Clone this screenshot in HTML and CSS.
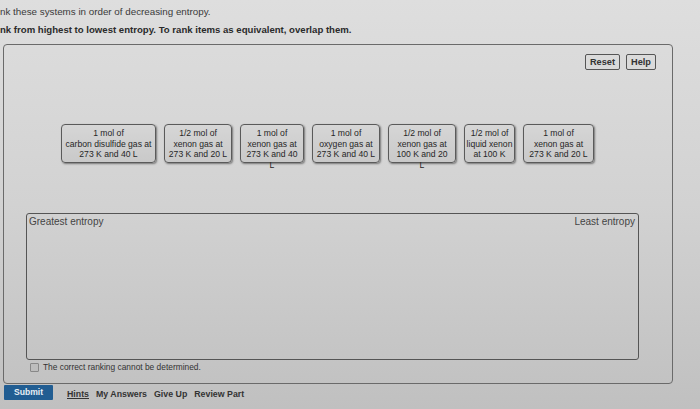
FILE: index.html
```html
<!DOCTYPE html>
<html>
<head>
<meta charset="utf-8">
<link rel="stylesheet" href="styles.css">
</head>
<body>
<div class="page">
  <div class="intro">
    <p class="line1">nk these systems in order of decreasing entropy.</p>
    <p class="line2">nk from highest to lowest entropy. To rank items as equivalent, overlap them.</p>
  </div>
  <div class="panel">
    <div class="toolbar">
      <span class="btn">Reset</span>
      <span class="btn">Help</span>
    </div>
    <div class="cards">
      <div class="card c1">1 mol of<br>carbon disulfide gas at<br>273 K and 40 L</div>
      <div class="card c2">1/2 mol of<br>xenon gas at<br>273 K and 20 L</div>
      <div class="card c3">1 mol of<br>xenon gas at<br>273 K and 40<br>L</div>
      <div class="card c4">1 mol of<br>oxygen gas at<br>273 K and 40 L</div>
      <div class="card c5">1/2 mol of<br>xenon gas at<br>100 K and 20<br>L</div>
      <div class="card c6">1/2 mol of<br>liquid xenon<br>at 100 K</div>
      <div class="card c7">1 mol of<br>xenon gas at<br>273 K and 20 L</div>
    </div>
    <div class="dropzone">
      <span class="zlabel">Greatest entropy</span>
      <span class="zlabel">Least entropy</span>
    </div>
    <label class="check"><span class="box"></span>The correct ranking cannot be determined.</label>
  </div>
  <div class="actions">
    <span class="submit">Submit</span>
    <span class="link under">Hints</span>
    <span class="link">My Answers</span>
    <span class="link">Give Up</span>
    <span class="link">Review Part</span>
  </div>
</div>
</body>
</html>
```
FILE: styles.css
```css
html, body {
  margin: 0;
  padding: 0;
}
body {
  width: 700px;
  height: 409px;
  overflow: hidden;
  font-family: "Liberation Sans", Arial, sans-serif;
  color: #2e2e2e;
  background: linear-gradient(180deg, #dedede 0%, #d2d2d2 50%, #c0c0c0 100%);
}
.page {
  display: flex;
  flex-direction: column;
}
.intro p {
  margin: 0;
  white-space: nowrap;
}
.line1 {
  font-size: 9.8px;
  padding-top: 6px;
  height: 13px;
  color: #3a3a3a;
}
.line2 {
  font-size: 9.6px;
  font-weight: bold;
  padding-top: 5px;
  height: 14px;
  color: #2a2a2a;
}
.panel {
  margin: 6px 0 0 3px;
  width: 670px;
  height: 340px;
  border: 1px solid #6a6a6a;
  border-radius: 4px;
  box-sizing: border-box;
  display: flex;
  flex-direction: column;
}
.toolbar {
  display: flex;
  justify-content: flex-end;
  gap: 6px;
  padding: 9px 16px 0 0;
}
.btn {
  font-size: 9.2px;
  font-weight: bold;
  color: #333;
  border: 1px solid #555;
  border-radius: 2px;
  padding: 1px 2px;
  height: 12px;
  line-height: 12px;
}
.btn:first-child { width: 29px; text-align: center; }
.btn:last-child { width: 24px; text-align: center; }
.cards {
  display: flex;
  gap: 8px;
  margin: 54px 0 0 57px;
  height: 39px;
}
.card {
  box-sizing: border-box;
  height: 39px;
  border: 1px solid #5a5a5a;
  border-radius: 4px;
  background: linear-gradient(180deg, #d6d6d6, #c9c9c9);
  box-shadow: 1px 1px 2px rgba(0,0,0,0.45);
  font-size: 8.6px;
  line-height: 10.6px;
  text-align: center;
  white-space: nowrap;
  padding-top: 3px;
  color: #262626;
}
.c1 { width: 95px; }
.c2 { width: 68px; }
.c3 { width: 64px; }
.c4 { width: 68px; }
.c5 { width: 68px; }
.c6 { width: 51px; }
.c7 { width: 71px; }
.dropzone {
  margin: 50px 0 0 22px;
  width: 613px;
  height: 147px;
  box-sizing: border-box;
  border: 1px solid #555;
  border-radius: 3px;
  display: flex;
  justify-content: space-between;
  align-items: flex-start;
  padding: 2px 3px 0 2px;
}
.zlabel {
  font-size: 10px;
  color: #444;
}
.check {
  display: flex;
  align-items: center;
  gap: 4px;
  margin: 2px 0 0 26px;
  font-size: 8.4px;
  color: #333;
}
.box {
  width: 7px;
  height: 7px;
  border: 1px solid #888;
  background: #bdbdbd;
  border-radius: 1px;
}
.actions {
  display: flex;
  align-items: center;
  margin: 1px 0 0 4px;
  gap: 7px;
}
.submit {
  width: 49px;
  height: 15px;
  line-height: 15px;
  background: #215d92;
  color: #e8eef4;
  font-size: 8.6px;
  font-weight: bold;
  text-align: center;
  border-radius: 1px;
  margin-right: 7px;
}
.link {
  font-size: 8.8px;
  font-weight: bold;
  color: #333;
  padding-top: 3px;
}
.under { text-decoration: underline; }
```
